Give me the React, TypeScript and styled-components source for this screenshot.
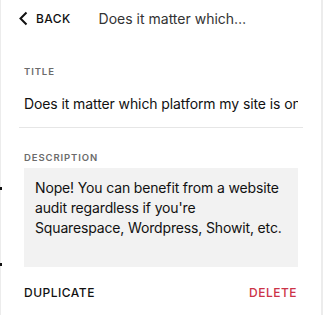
import React from "react";
import styled, { createGlobalStyle } from "styled-components";

const Global = createGlobalStyle`
  html, body { margin: 0; padding: 0; background: #fff; }
  body { font-family: Inter, "Liberation Sans", Arial, sans-serif; -webkit-font-smoothing: antialiased; }
  * { box-sizing: border-box; }
`;

const Panel = styled.div`
  position: relative;
  width: 323px;
  height: 315px;
  background: #fff;
  border-left: 1px solid #ececec;
  border-right: 2px solid #ececec;
  display: flex;
  flex-direction: column;
`;

const Header = styled.div`
  height: 36px;
  display: flex;
  align-items: center;
  padding: 0 0 0 17px;
`;

const BackButton = styled.button`
  display: flex;
  align-items: center;
  gap: 7px;
  background: none;
  border: none;
  padding: 0;
  font-family: inherit;
  font-size: 12px;
  font-weight: 500;
  letter-spacing: 0.4px;
  color: #111;
  cursor: pointer;
`;

const HeaderTitle = styled.div`
  margin-left: 28px;
  font-size: 14px;
  color: #333;
  white-space: nowrap;
`;

const Body = styled.div`
  padding: 30px 18px 0 18px;
  display: flex;
  flex-direction: column;
`;

const Field = styled.div<{ $underline?: boolean; $gap?: number }>`
  display: flex;
  flex-direction: column;
  padding: 0 5px;
  margin-top: ${(p) => p.$gap ?? 0}px;
  border-bottom: ${(p) => (p.$underline ? "1px solid #e6e6e6" : "none")};
`;

const Label = styled.div`
  font-size: 9.5px;
  font-weight: 600;
  letter-spacing: 0.9px;
  color: #6b6b6b;
  text-transform: uppercase;
  line-height: 12px;
`;

const TitleInput = styled.input`
  margin-top: 16px;
  margin-bottom: 13px;
  height: 20px;
  width: 100%;
  padding: 0;
  border: none;
  outline: none;
  background: transparent;
  font-family: inherit;
  font-size: 14px;
  line-height: 20px;
  letter-spacing: -0.1px;
  color: #111;
`;

const DescBox = styled.div`
  margin-top: 4px;
  background: #f2f2f2;
  height: 99px;
  padding: 10px 10px 10px 11px;
  font-size: 14px;
  line-height: 20px;
  letter-spacing: -0.15px;
  color: #111;
`;

const Footer = styled.div`
  display: flex;
  justify-content: space-between;
  padding: 18px 24px 0 23px;
`;

const Action = styled.button<{ $danger?: boolean }>`
  background: none;
  border: none;
  padding: 0;
  font-family: inherit;
  font-size: 12px;
  font-weight: 500;
  letter-spacing: 0.5px;
  color: ${(p) => (p.$danger ? "#cc3347" : "#111")};
  cursor: pointer;
`;

const Tick = styled.div<{ $top: number }>`
  position: absolute;
  left: -1px;
  top: ${(p) => p.$top}px;
  width: 2px;
  height: 3px;
  background: #111;
`;

export default function App() {
  return (
    <>
      <Global />
      <Panel>
        <Header>
          <BackButton>
            <svg width="11" height="15" viewBox="0 0 11 15" fill="none">
              <path d="M8.5 1.5L2.5 7.5l6 6" stroke="#111" strokeWidth="2" />
            </svg>
            BACK
          </BackButton>
          <HeaderTitle>Does it matter which…</HeaderTitle>
        </Header>
        <Body>
          <Field $underline>
            <Label>Title</Label>
            <TitleInput readOnly value="Does it matter which platform my site is on?" />
          </Field>
          <Field $gap={24}>
            <Label>Description</Label>
            <DescBox>
              Nope! You can benefit from a website audit regardless if you're Squarespace, Wordpress, Showit, etc.
            </DescBox>
          </Field>
        </Body>
        <Footer>
          <Action>DUPLICATE</Action>
          <Action $danger>DELETE</Action>
        </Footer>
        <Tick $top={187} />
        <Tick $top={263} />
      </Panel>
    </>
  );
}
